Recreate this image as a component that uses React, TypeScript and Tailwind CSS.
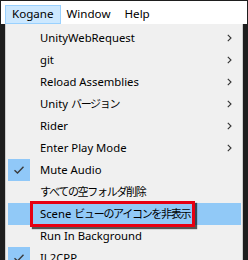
import React from "react";

type Item = {
  label: string;
  sub?: boolean;
  checked?: boolean;
  selected?: boolean;
};

const items: Item[] = [
  { label: "UnityWebRequest", sub: true },
  { label: "git", sub: true },
  { label: "Reload Assemblies", sub: true },
  { label: "Unity バージョン", sub: true },
  { label: "Rider", sub: true },
  { label: "Enter Play Mode", sub: true },
  { label: "Mute Audio", checked: true },
  { label: "すべての空フォルダ削除" },
  { label: "Scene ビューのアイコンを非表示", selected: true },
  { label: "Run In Background" },
  { label: "IL2CPP", checked: true },
];

// japanese parts get a tighter spacing, like the narrow UI font in the picture
const Label = ({ text }: { text: string }) => {
  const parts = text.split(/([^\x00-\x7f]+)/).filter((p) => p !== "");
  return (
    <span className="ml-[10px] leading-none whitespace-nowrap">
      {parts.map((p, i) =>
        /[^\x00-\x7f]/.test(p) ? (
          <span key={i} className="text-[11px] tracking-[-1.3px]">
            {p}
          </span>
        ) : (
          <span key={i}>{p}</span>
        )
      )}
    </span>
  );
};

const Check = () => (
  <svg width="12" height="10" viewBox="0 0 12 10" fill="none">
    <path d="M1.5 5.2 L4.5 8 L10.5 1.8" stroke="#3a3a3a" strokeWidth="1.4" />
  </svg>
);

const Chevron = () => (
  <svg width="5" height="8" viewBox="0 0 5 8" fill="none">
    <path d="M0.8 0.8 L4 4 L0.8 7.2" stroke="#333" strokeWidth="1.1" />
  </svg>
);

const App = () => {
  return (
    <div
      className="w-[248px] h-[260px] overflow-hidden bg-[#1e1e1e] flex flex-col pt-px px-px text-[11.3px] text-black"
      style={{ fontFamily: '"Segoe UI", "Noto Sans", "Noto Sans CJK JP", sans-serif' }}
    >
      <div className="h-[23px] bg-white flex flex-row items-center pl-[4px] shrink-0 text-[11.6px]">
        <span className="h-[19px] mt-[3px] px-[6px] flex items-center bg-[#cce8ff] border border-[#99d1ff]">
          Kogane
        </span>
        <span className="pl-[6px] pr-[7px] mt-[3px]">Window</span>
        <span className="px-[7px] mt-[3px]">Help</span>
      </div>

      <div className="flex flex-row flex-1">
        <div className="w-[4px] shrink-0" />
        <div className="w-[238px] shrink-0 bg-[#f0f0f0] border-l border-r border-[#cccccc] pt-[3px] flex flex-col">
          {items.map((item, index) => (
            <div
              key={index}
              className={`relative h-[22px] ml-[2px] mr-[1px] flex flex-row items-center shrink-0 ${
                item.selected ? "bg-[#91c9f7]" : "bg-transparent"
              }`}
            >
              <div
                className={`w-[22px] h-[22px] flex items-center justify-center ${
                  item.checked ? "bg-[#90c8f8]" : ""
                }`}
              >
                {item.checked && <Check />}
              </div>
              <Label text={item.label} />
              {item.sub && (
                <span className="absolute right-[9px] top-[7px] flex">
                  <Chevron />
                </span>
              )}
              {item.selected && (
                <div className="absolute left-[22px] top-[-2px] w-[165px] h-[26px] border-[3px] border-[#e60012] shadow-[2px_2px_1px_rgba(0,0,0,0.65)]" />
              )}
            </div>
          ))}
        </div>
      </div>
    </div>
  );
};

export default App;
